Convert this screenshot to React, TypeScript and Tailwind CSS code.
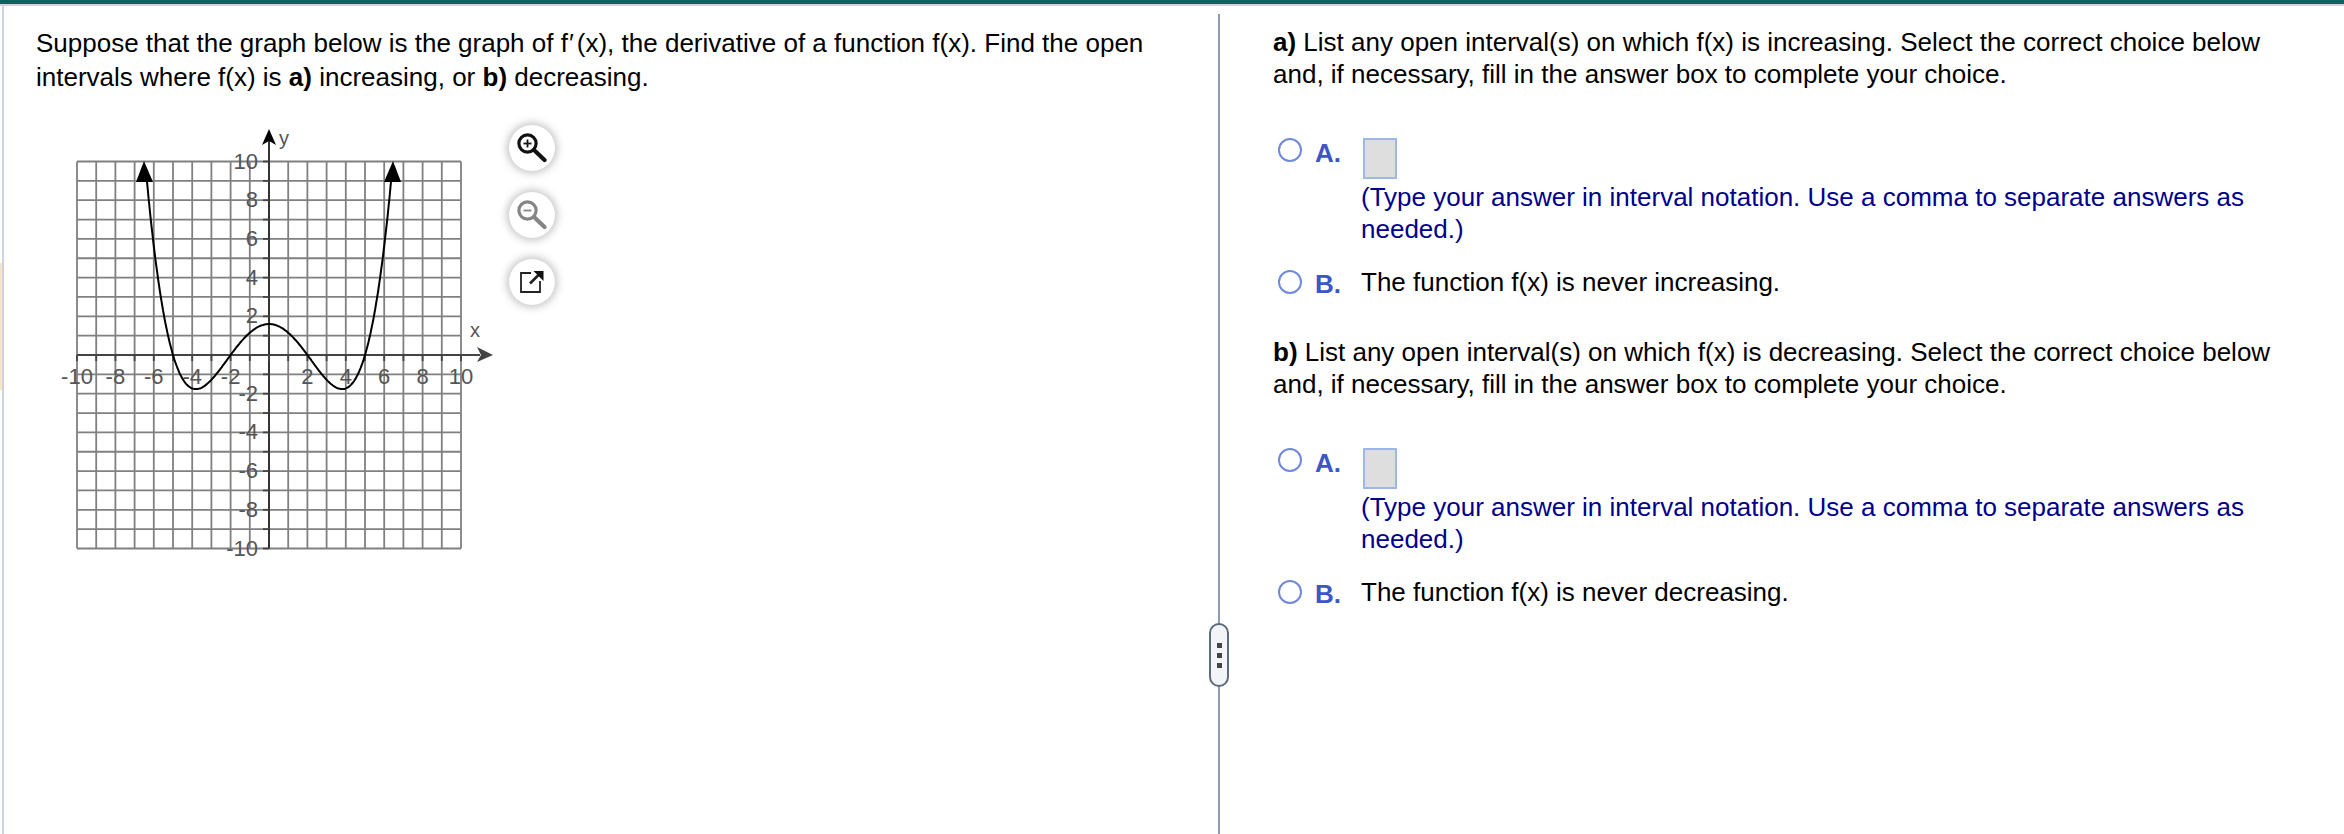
import React from 'react';

const sx = (x: number) => 269 + x * 19.2;
const sy = (y: number) => 355 - y * 19.35;
const f = (x: number) => 0.016 * (x * x - 25) * (x * x - 4);

const gridX = Array.from({ length: 21 }, (_, i) => i - 10);
const gridY = Array.from({ length: 21 }, (_, i) => i - 10);

function curvePath() {
  const pts: string[] = [];
  for (let x = -6.42; x <= 6.42; x += 0.05) {
    pts.push(`${sx(x).toFixed(1)},${sy(f(x)).toFixed(1)}`);
  }
  return 'M' + pts.join('L');
}

function Graph() {
  const xLabels = [-10, -8, -6, -4, -2, 2, 4, 6, 8, 10];
  const yLabels = [10, 8, 6, 4, 2, -2, -4, -6, -8, -10];
  return (
    <svg width="470" height="440" viewBox="36 119 470 440" className="block" style={{ fontFamily: '"Liberation Sans", Arial, sans-serif' }}>
      {gridX.map((x) => (
        <line key={x} x1={sx(x)} x2={sx(x)} y1={sy(10)} y2={sy(-10)} stroke="#808080" strokeWidth="1.8" />
      ))}
      {gridY.map((y) => (
        <line key={y} x1={sx(-10)} x2={sx(10)} y1={sy(y)} y2={sy(y)} stroke="#808080" strokeWidth="1.8" />
      ))}
      {/* axes */}
      <line x1={sx(-10)} x2="480" y1={sy(0)} y2={sy(0)} stroke="#444" strokeWidth="2" />
      <line x1={sx(0)} x2={sx(0)} y1={sy(-10)} y2="140" stroke="#333" strokeWidth="2" />
      {gridX.map((x) => (
        <line key={x} x1={sx(x)} x2={sx(x)} y1={sy(0)} y2={sy(0) + 6} stroke="#444" strokeWidth="1.8" />
      ))}
      {gridY.map((y) => (
        <line key={y} x1={sx(0) - 6} x2={sx(0)} y1={sy(y)} y2={sy(y)} stroke="#444" strokeWidth="1.8" />
      ))}
      <path d="M493,355 L477,347 L481,355 L477,362 Z" fill="#444" />
      <path d="M269,129 L262,145 L269,141 L276,145 Z" fill="#000" />
      {xLabels.map((x) => (
        <text key={x} x={sx(x)} y="384" fontSize="22" fill="#555" textAnchor="middle">
          {x}
        </text>
      ))}
      {yLabels.map((y) => (
        <text key={y} x="258" y={sy(y) + 7} fontSize="22" fill="#555" textAnchor="end">
          {y}
        </text>
      ))}
      <text x="279" y="145" fontSize="20" fill="#555">y</text>
      <text x="475" y="337" fontSize="20" fill="#555" textAnchor="middle">x</text>
      <path d={curvePath()} fill="none" stroke="#000" strokeWidth="2" />
      <path d="M144,161 L136,182 L153,182 Z" fill="#000" />
      <path d="M393,161 L384,182 L401,182 Z" fill="#000" />
    </svg>
  );
}

function ToolButton({ children }: { children: React.ReactNode }) {
  return (
    <button className="w-[46px] h-[46px] rounded-full bg-white shadow-[0_0_8px_2px_rgba(0,0,0,0.25)] flex items-center justify-center">
      {children}
    </button>
  );
}

function ZoomIcon({ minus }: { minus?: boolean }) {
  const color = minus ? '#858585' : '#111';
  return (
    <svg width="30" height="30" viewBox="0 0 30 30" fill="none" stroke={color}>
      <circle cx="10.5" cy="10.5" r="8.6" strokeWidth="3.2" />
      <line x1="17" y1="17" x2="27.5" y2="27" strokeWidth="4.2" strokeLinecap="round" />
      <line x1="6.5" y1="10.5" x2="14.5" y2="10.5" strokeWidth="1.8" />
      {!minus && <line x1="10.5" y1="6.5" x2="10.5" y2="14.5" strokeWidth="1.8" />}
    </svg>
  );
}

function ExternalIcon() {
  return (
    <svg width="30" height="30" viewBox="0 0 30 30" fill="none" stroke="#222">
      <path d="M14 6H4V25H23V14" strokeWidth="1.8" />
      <line x1="13" y1="16.5" x2="22" y2="7.5" strokeWidth="2.6" />
      <path d="M16.5 4H26.5V14Z" fill="#111" stroke="none" />
    </svg>
  );
}

function Radio() {
  return <span className="block w-[24px] h-[24px] rounded-full border-[2.5px] border-[#7089d8] bg-white shrink-0" />;
}

function Question({ tag, verb, never }: { tag: string; verb: string; never: string }) {
  return (
    <div>
      <p className="leading-[32px]">
        <b>{tag}</b> List any open interval(s) on which f(x) is {verb}. Select the correct choice below and, if necessary, fill in the answer box to complete your choice.
      </p>
      <div className="mt-[48px] flex">
        <div className="w-[88px] flex shrink-0">
          <div className="w-[42px] pl-[5px]"><Radio /></div>
          <b className="text-[#3c56c6] -mt-[4px]">A.</b>
        </div>
        <div className="flex-1">
          <div className="ml-[2px] w-[34px] h-[41px] bg-[#dedede] border-2 border-[#9db8e8]" />
          <p className="text-[#00008b] leading-[32px] mt-[2px]">
            (Type your answer in interval notation. Use a comma to separate answers as needed.)
          </p>
        </div>
      </div>
      <div className="mt-[21px] flex">
        <div className="w-[88px] flex shrink-0">
          <div className="w-[42px] pl-[5px] pt-[4px]"><Radio /></div>
          <b className="text-[#3c56c6] -mt-[1px]">B.</b>
        </div>
        <p className="leading-[32px]">The function f(x) is never {never}.</p>
      </div>
    </div>
  );
}

export default function App() {
  return (
    <div className="h-[834px] overflow-hidden flex flex-col bg-white text-black text-[26px]" style={{ fontFamily: '"Liberation Sans", Arial, sans-serif' }}>
      <div className="h-[4px] bg-[#0b655e] shrink-0" />
      <div className="h-[2px] bg-[#cdd3e0] shrink-0" />
      <div className="flex flex-1 min-h-0">
        {/* left edge strips */}
        <div className="w-[2px] shrink-0 pt-[257px]">
          <div className="h-[127px] bg-[#f5e8bf]" />
        </div>
        <div className="w-[2px] shrink-0 bg-[#cdd3e0]" />

        <div className="w-[1214px] shrink-0 pl-[32px] pr-[60px] pt-[20px]">
          <p className="leading-[34px]">
            Suppose that the graph below is the graph of f<span className="ml-[1px] mr-[3px]">&#8242;</span>(x), the derivative of a function f(x). Find the open intervals where f(x) is <b>a)</b> increasing, or <b>b)</b> decreasing.
          </p>
          <div className="flex mt-[25px]">
            <div className="w-[471px] shrink-0"><Graph /></div>
            <div className="flex flex-col gap-[21px] mt-[6px] ml-[2px]">
              <ToolButton><ZoomIcon /></ToolButton>
              <ToolButton><ZoomIcon minus /></ToolButton>
              <ToolButton><ExternalIcon /></ToolButton>
            </div>
          </div>
        </div>

        {/* divider */}
        <div className="relative w-[2px] shrink-0 bg-[#8e9bb0] mt-[8px]">
          <div className="absolute left-[-9px] top-[609px] w-[20px] h-[64px] rounded-[10px] border-2 border-[#5d6b7c] bg-[#f2f4f8] flex flex-col items-center justify-center gap-[5px]">
            <span className="w-[5px] h-[5px] bg-[#444]" />
            <span className="w-[5px] h-[5px] bg-[#444]" />
            <span className="w-[5px] h-[5px] bg-[#444]" />
          </div>
        </div>

        <div className="flex-1 pl-[53px] pr-[40px] pt-[20px]">
          <Question tag="a)" verb="increasing" never="increasing" />
          <div className="mt-[32px]">
            <Question tag="b)" verb="decreasing" never="decreasing" />
          </div>
        </div>
      </div>
    </div>
  );
}
